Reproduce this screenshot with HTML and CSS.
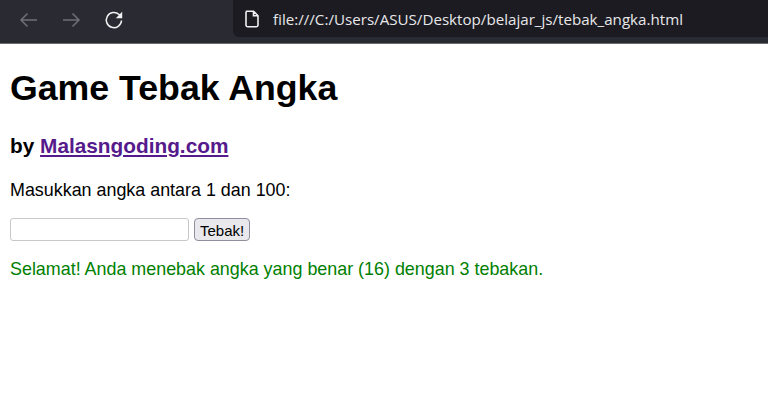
FILE: index.html
```html
<!DOCTYPE html>
<html>
<head>
<meta name="viewport" content="width=device-width, initial-scale=1">
<link rel="stylesheet" href="styles.css">
</head>
<body>

<div class="toolbar">
  <div class="nav">
    <svg class="nav-icon" viewBox="0 0 20 20"><path d="M18 10H2M8.5 3.5L2 10l6.500 6.500" stroke="#6f6f75"/></svg>
    <svg class="nav-icon" viewBox="0 0 20 20"><path d="M2 10h16M11.500 3.500L18 10l-6.500 6.500" stroke="#6f6f75"/></svg>
    <svg class="nav-icon" viewBox="0 0 20 20"><path d="M17.500 10.500a7.600 7.600 0 1 1-2.400-6L17 6.500" stroke="#f1f1f3"/><path d="M18.200 1.800v6.400h-6.400z" fill="#f1f1f3"/></svg>
  </div>
  <div class="address">
    <svg class="file-icon" viewBox="0 0 16 18"><path d="M2.500 1.200h7l4.500 4.600v9.200a1.800 1.800 0 0 1-1.800 1.800H3.800A1.800 1.800 0 0 1 2 15V2.500zM9.500 1.200v4.600H14" stroke="#f1f1f3"/></svg>
    <span class="url">file:///C:/Users/ASUS/Desktop/belajar_js/tebak_angka.html</span>
  </div>
</div>

<div class="page">
  <h1>Game Tebak Angka</h1>
  <h3>by <a href="#">Malasngoding.com</a></h3>
  <p>Masukkan angka antara 1 dan 100:</p>
  <div class="form-row">
    <input type="text" class="guess">
    <button class="guess-btn">Tebak!</button>
  </div>
  <p class="result">Selamat! Anda menebak angka yang benar (16) dengan 3 tebakan.</p>
</div>

</body>
</html>
```
FILE: styles.css
```css
* {
  box-sizing: border-box;
}

body {
  margin: 0;
  background: #fff;
  font-family: "Liberation Sans", Arial, sans-serif;
  color: #000;
}

/* Browser bar */
.toolbar {
  display: flex;
  height: 44px;
  background: #2a2a32;
  border-bottom: 1px solid #6b6b6e;
}

.nav {
  display: flex;
  align-items: center;
  gap: 22.500px;
  width: 233px;
  padding: 0 0 3px 18.500px;
}

.nav-icon {
  width: 20px;
  height: 20px;
  fill: none;
  stroke-width: 1.500;
}

.address {
  display: flex;
  align-items: center;
  flex: 1;
  height: 37px;
  padding-left: 11px;
  background: #1c1b22;
  border-radius: 0 0 0 6px;
}

.file-icon {
  width: 16px;
  height: 18px;
  fill: none;
  stroke-width: 1.600;
}

.url {
  margin-left: 13px;
  font-family: "Open Sans", sans-serif;
  font-size: 15.150px;
  color: #e8e8ea;
}

/* Page content */
.page {
  padding: 0 10px;
}

h1 {
  margin: 24px 0 0;
  font-size: 35.700px;
  line-height: 40px;
}

h3 {
  margin: 26px 0 0;
  font-size: 20.800px;
  line-height: 24px;
}

a {
  color: #551a8b;
}

p {
  margin: 22px 0 0;
  font-size: 17.900px;
  line-height: 20px;
}

.form-row {
  display: flex;
  align-items: center;
  gap: 5px;
  margin-top: 18px;
}

.guess {
  width: 179px;
  height: 23px;
  border: 1px solid #c8c8c8;
  border-radius: 3px;
  background: #fff;
}

.guess-btn {
  height: 23px;
  padding: 1px 5px 0;
  font-family: "Liberation Sans", Arial, sans-serif;
  font-size: 15px;
  color: #000;
  background: #e9e9ed;
  border: 1px solid #8f8f9d;
  border-radius: 4px;
}

.result {
  margin-top: 18px;
  color: #008000;
}
```
